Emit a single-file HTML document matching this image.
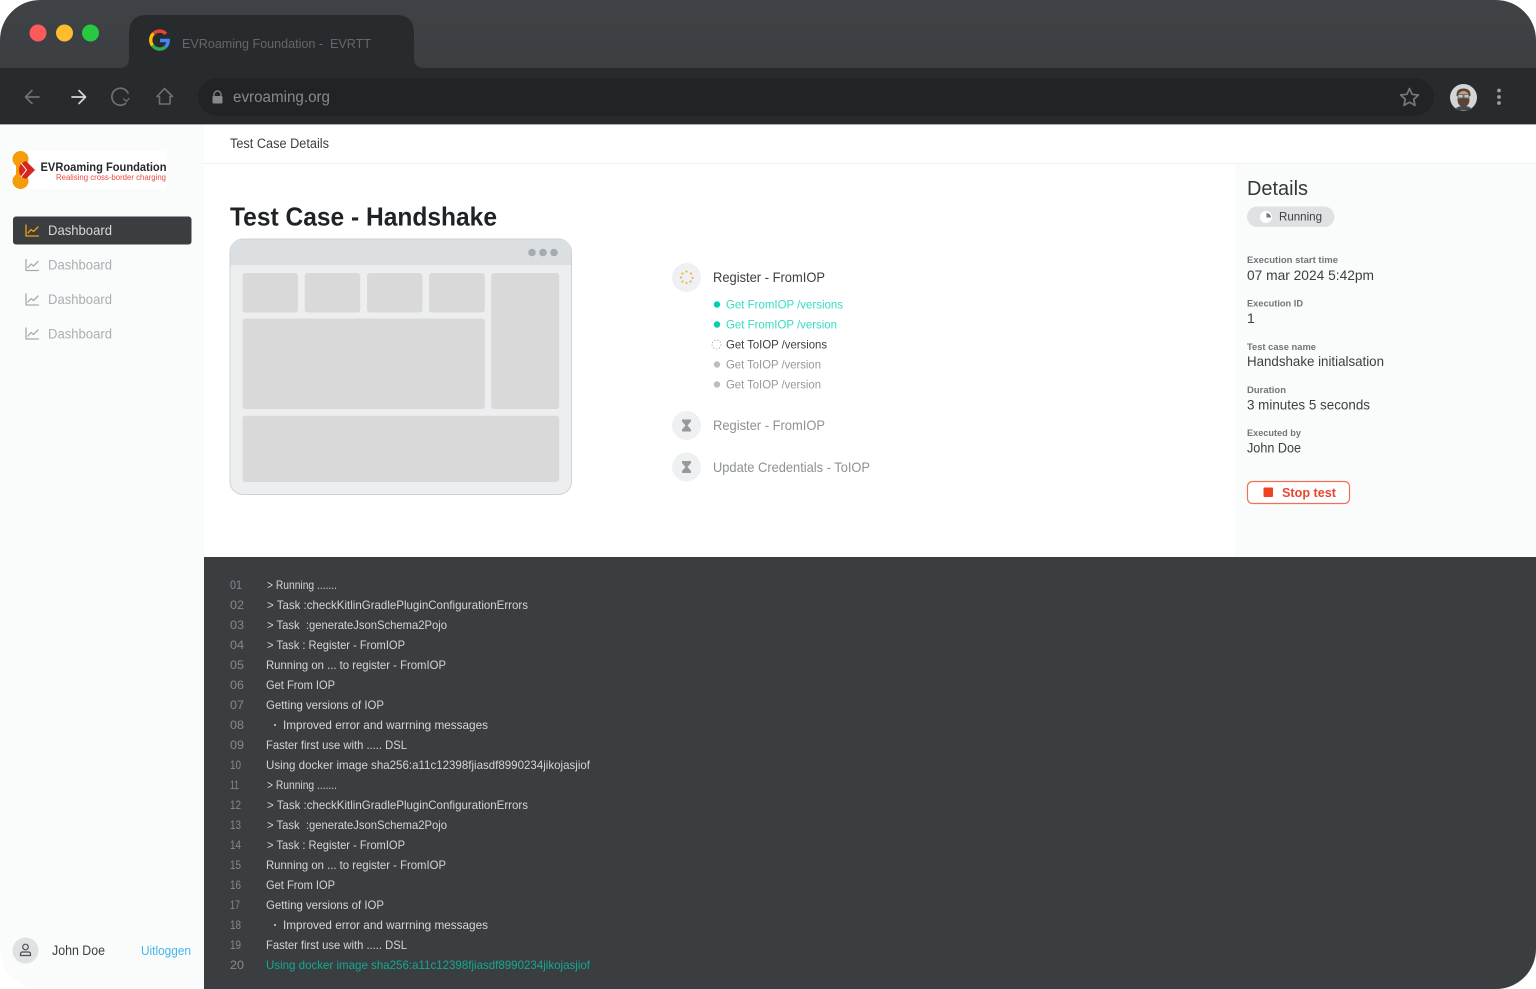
<!DOCTYPE html>
<html><head><meta charset="utf-8"><title>EVRoaming Foundation - EVRTT</title>
<style>
html,body{margin:0;padding:0;background:#fff;width:1536px;height:989px;overflow:hidden}
svg{display:block}
text{font-family:"Liberation Sans",sans-serif;white-space:pre}
.log text{font-size:12px;fill:#d3d5d6}
.log .n{fill:#85898c}
.log .m{font-size:11.500px}
.lab{font-size:9.5px;font-weight:bold;fill:#6f767a}
.val{font-size:14px;fill:#3c4043}
.dash{font-size:14px;fill:#a9afb3}
.sub{font-size:12px}
</style></head><body>
<svg xmlns="http://www.w3.org/2000/svg" width="1536" height="989" viewBox="0 0 1536 989">
<defs>
<clipPath id="frame"><rect width="1536" height="989" rx="40" ry="40"/></clipPath>
<linearGradient id="top" x1="0" y1="0" x2="0" y2="1"><stop offset="0" stop-color="#3f4346"/><stop offset="1" stop-color="#3b3f42"/></linearGradient>
</defs>
<g clip-path="url(#frame)">
<rect width="1536" height="989" fill="#fff"/>
<!-- browser chrome -->
<rect width="1536" height="68" fill="url(#top)"/>
<rect y="68" width="1536" height="57" fill="#282b2e"/>
<rect y="124" width="1536" height="1" fill="#a9acae"/>
<path d="M119 68Q129 68 129 58V33Q129 15 147 15H396Q414 15 414 33V58Q414 68 424 68Z" fill="#282b2e"/>
<circle cx="38" cy="33" r="8.5" fill="#ff5a5a"/>
<circle cx="64.500" cy="33" r="8.5" fill="#ffbd2e"/>
<circle cx="90.500" cy="33" r="8.5" fill="#28c840"/>
<!-- google G -->
<g fill="none" stroke-width="3.4">
<path d="M166 33.800A9 9 0 0 0 153.500 33.500" stroke="#ea4335"/>
<path d="M153.500 33.500A9 9 0 0 0 152.600 45.500" stroke="#fbbc05"/>
<path d="M152.600 45.500A9 9 0 0 0 165.500 47" stroke="#34a853"/>
<path d="M165.500 47A9 9 0 0 0 168.200 40.500H160" stroke="#4285f4"/>
</g>
<text x="182" y="48" font-size="13" fill="#63676a" textLength="189" lengthAdjust="spacingAndGlyphs">EVRoaming Foundation -  EVRTT</text>
<!-- toolbar -->
<rect x="198" y="78" width="1236" height="38" rx="19" fill="#212427"/>
<g fill="none" stroke-linecap="round" stroke-linejoin="round">
<path d="M39 97H26M32 90.500L25.500 97L32 103.500" stroke="#6d7174" stroke-width="1.700"/>
<path d="M72 97H85M79 90.500L85.500 97L79 103.500" stroke="#d5d7d8" stroke-width="1.700"/>
<path d="M128 93A8.500 8.500 0 1 0 125.500 103.500" stroke="#6d7174" stroke-width="1.700"/>
<path d="M123.800 98.800L126.500 101.500L129 98.500" stroke="#6d7174" stroke-width="1.300"/>
<path d="M157 96.500L164.500 88.500L172.500 96.500H170V104H159.500V96.500Z" stroke="#6d7174" stroke-width="1.600"/>
<path d="M1409.500 88.500L1412.100 94.300L1418.400 95L1413.700 99.200L1415 105.400L1409.500 102.200L1404 105.400L1405.300 99.200L1400.600 95L1406.900 94.300Z" stroke="#75797c" stroke-width="1.700"/>
</g>
<path d="M214 96.500V94.500A3.500 3.500 0 0 1 221 94.500V96.500" fill="none" stroke="#868a8d" stroke-width="1.300"/>
<rect x="212.500" y="96" width="10" height="7.500" rx="1" fill="#868a8d"/>
<text x="233" y="102" font-size="15.500" fill="#868a8d" textLength="97" lengthAdjust="spacingAndGlyphs">evroaming.org</text>
<circle cx="1463.500" cy="97.500" r="13.500" fill="#d4d5d5"/>
<path d="M1456.500 96Q1456 88.500 1463.500 88.500Q1471 88.500 1470.500 96Z" fill="#5b4336"/>
<ellipse cx="1463.500" cy="98" rx="6" ry="7" fill="#c79c86"/>
<path d="M1457.500 99Q1463.500 97 1469.500 99Q1469.500 106.500 1463.500 106.500Q1457.500 106.500 1457.500 99Z" fill="#5b4336"/>
<rect x="1458" y="94.500" width="5" height="3.500" fill="#bfc5c6" stroke="#4d5356" stroke-width=".7"/>
<rect x="1464" y="94.500" width="5" height="3.500" fill="#bfc5c6" stroke="#4d5356" stroke-width=".7"/>
<path d="M1456 108Q1463.500 103.500 1471 108L1469 110.500H1458Z" fill="#454a4d"/>
<circle cx="1499" cy="90.500" r="1.900" fill="#9a9da0"/><circle cx="1499" cy="97" r="1.900" fill="#9a9da0"/><circle cx="1499" cy="103" r="1.900" fill="#9a9da0"/>

<!-- sidebar -->
<rect y="125" width="204" height="864" fill="#fafbfb"/>
<rect x="13" y="151" width="153.500" height="38" fill="#fff"/>
<circle cx="20.500" cy="159" r="8" fill="#f59c0b"/>
<circle cx="20.500" cy="181" r="8" fill="#f59c0b"/>
<rect x="16" y="160" width="9" height="20" fill="#f59c0b"/>
<path d="M26 161L35 170L26 179Q19 177 19 170Q19 163 26 161Z" fill="#d8261c"/>
<path d="M21 163L26.500 170L21 177" fill="none" stroke="#fff" stroke-width="1"/>
<text x="40.500" y="171" font-size="12" font-weight="bold" fill="#26292b" textLength="126" lengthAdjust="spacingAndGlyphs">EVRoaming Foundation</text>
<text x="56" y="180" font-size="8" fill="#ea4b40" textLength="110" lengthAdjust="spacingAndGlyphs">Realising cross-border charging</text>

<rect x="13" y="216.500" width="178.500" height="28" rx="3" fill="#3a3e41"/>
<g fill="none" stroke-width="1.300" stroke-linejoin="round" stroke-linecap="round">
<path d="M26 225V236H38.500M28 233L31 229.500L33.500 231.500L38 227" stroke="#f0a012"/>
<path d="M26 259.500V270.500H38.500M28 267.500L31 264L33.500 266L38 261.500" stroke="#a5abaf"/>
<path d="M26 294V305H38.500M28 302L31 298.500L33.500 300.500L38 296" stroke="#a5abaf"/>
<path d="M26 328V339H38.500M28 336L31 332.500L33.500 334.500L38 330" stroke="#a5abaf"/>
</g>
<text x="48" y="235" class="dash" style="fill:#d6d8d9" textLength="64" lengthAdjust="spacingAndGlyphs">Dashboard</text>
<text x="48" y="269.500" class="dash" textLength="64" lengthAdjust="spacingAndGlyphs">Dashboard</text>
<text x="48" y="304" class="dash" textLength="64" lengthAdjust="spacingAndGlyphs">Dashboard</text>
<text x="48" y="338.500" class="dash" textLength="64" lengthAdjust="spacingAndGlyphs">Dashboard</text>

<circle cx="25.500" cy="950.500" r="13" fill="#dfe1e3"/>
<circle cx="25.500" cy="947" r="2.800" fill="none" stroke="#4c5053" stroke-width="1.200"/>
<path d="M20.500 955.500V954Q20.500 952 23 952H28Q30.500 952 30.500 954V955.500Z" fill="none" stroke="#4c5053" stroke-width="1.200"/>
<text x="52" y="955" font-size="14" fill="#3c4043" textLength="53" lengthAdjust="spacingAndGlyphs">John Doe</text>
<text x="141" y="955" font-size="12.500" fill="#45b5ea" textLength="50" lengthAdjust="spacingAndGlyphs">Uitloggen</text>

<!-- header -->
<rect x="204" y="163" width="1332" height="1" fill="#f1f2f3"/>
<text x="230" y="148" font-size="13.500" fill="#3c4043" textLength="99" lengthAdjust="spacingAndGlyphs">Test Case Details</text>
<text x="230" y="225.500" font-size="26" font-weight="bold" fill="#1f2326" textLength="267" lengthAdjust="spacingAndGlyphs">Test Case - Handshake</text>

<!-- illustration -->
<rect x="230" y="239" width="341.500" height="255.500" rx="13" fill="#edeef0" stroke="#ced2d4"/>
<path d="M230.500 265V252Q230.500 239.500 243 239.500H558.500Q571 239.500 571 252V265Z" fill="#dcdfe1"/>
<circle cx="532" cy="252.500" r="3.800" fill="#a5abaf"/><circle cx="543" cy="252.500" r="3.800" fill="#a5abaf"/><circle cx="554" cy="252.500" r="3.800" fill="#a5abaf"/>
<g fill="#d9d9d9">
<rect x="242.500" y="273" width="55.500" height="39.500" rx="3"/>
<rect x="304.700" y="273" width="55.500" height="39.500" rx="3"/>
<rect x="367" y="273" width="55.500" height="39.500" rx="3"/>
<rect x="429" y="273" width="55.800" height="39.500" rx="3"/>
<rect x="491.200" y="273" width="68" height="136" rx="3"/>
<rect x="242.500" y="318.500" width="242.300" height="90.500" rx="3"/>
<rect x="242.500" y="415.700" width="316.700" height="66.300" rx="3"/>
</g>

<!-- steps -->
<circle cx="686.500" cy="277.500" r="14.500" fill="#eff0f1"/>
<g fill="#f4a52c">
<circle cx="686.500" cy="271.500" r="1"/><circle cx="691" cy="273.500" r="1"/><circle cx="692.500" cy="278" r="1"/><circle cx="690.500" cy="281.500" r="1"/><circle cx="686.500" cy="283" r="1"/><circle cx="682.500" cy="281.500" r="1"/><circle cx="681" cy="277.500" r="1"/><circle cx="682.500" cy="273.500" r="1"/>
</g>
<text x="713" y="282" font-size="14" fill="#3c4043" textLength="112" lengthAdjust="spacingAndGlyphs">Register - FromIOP</text>
<circle cx="717" cy="304.500" r="3.200" fill="#00d1ae"/>
<circle cx="717" cy="324.500" r="3.200" fill="#00d1ae"/>
<circle cx="716.500" cy="344.500" r="4.500" fill="none" stroke="#b4b8ba" stroke-width="1" stroke-dasharray="1.500 1.600"/>
<circle cx="717" cy="364.500" r="3.200" fill="#bbbfc1"/>
<circle cx="717" cy="384.500" r="3.200" fill="#bbbfc1"/>
<text x="726" y="308.500" class="sub" fill="#35dcc1" textLength="117" lengthAdjust="spacingAndGlyphs">Get FromIOP /versions</text>
<text x="726" y="328.500" class="sub" fill="#35dcc1" textLength="111" lengthAdjust="spacingAndGlyphs">Get FromIOP /version</text>
<text x="726" y="348.500" class="sub" fill="#3c4043" textLength="101" lengthAdjust="spacingAndGlyphs">Get ToIOP /versions</text>
<text x="726" y="368.500" class="sub" fill="#94999c" textLength="95" lengthAdjust="spacingAndGlyphs">Get ToIOP /version</text>
<text x="726" y="388.500" class="sub" fill="#94999c" textLength="95" lengthAdjust="spacingAndGlyphs">Get ToIOP /version</text>
<circle cx="686.500" cy="425.500" r="14.500" fill="#eff0f1"/>
<path d="M682 419.500H691V421.500L687.500 425.500L691 429.500V431.500H682V429.500L685.500 425.500L682 421.500Z" fill="#949a9e"/>
<text x="713" y="430" font-size="14" fill="#8d9295" textLength="112" lengthAdjust="spacingAndGlyphs">Register - FromIOP</text>
<circle cx="686.500" cy="467" r="14.500" fill="#eff0f1"/>
<path d="M682 461H691V463L687.500 467L691 471V473H682V471L685.500 467L682 463Z" fill="#949a9e"/>
<text x="713" y="472" font-size="14" fill="#8d9295" textLength="157" lengthAdjust="spacingAndGlyphs">Update Credentials - ToIOP</text>

<!-- details -->
<rect x="1235" y="164" width="301" height="393" fill="#fafbfb"/>
<text x="1247" y="195" font-size="20" fill="#33373a" textLength="61" lengthAdjust="spacingAndGlyphs">Details</text>
<rect x="1247" y="206.500" width="87.500" height="20.500" rx="10.250" fill="#dfe1e3"/>
<circle cx="1266" cy="217" r="6" fill="#fff"/>
<path d="M1266.500 213V217.500H1271Q1270.500 213.500 1266.500 213Z" fill="#6f767a"/>
<text x="1279" y="220.500" font-size="12" fill="#3c4043" textLength="43" lengthAdjust="spacingAndGlyphs">Running</text>
<text x="1247" y="263" class="lab" textLength="91" lengthAdjust="spacingAndGlyphs">Execution start time</text>
<text x="1247" y="280" class="val" textLength="127" lengthAdjust="spacingAndGlyphs">07 mar 2024 5:42pm</text>
<text x="1247" y="306.500" class="lab" textLength="56" lengthAdjust="spacingAndGlyphs">Execution ID</text>
<text x="1247" y="323" class="val">1</text>
<text x="1247" y="350" class="lab" textLength="69" lengthAdjust="spacingAndGlyphs">Test case name</text>
<text x="1247" y="366" class="val" textLength="137" lengthAdjust="spacingAndGlyphs">Handshake initialsation</text>
<text x="1247" y="393" class="lab" textLength="39" lengthAdjust="spacingAndGlyphs">Duration</text>
<text x="1247" y="409.500" class="val" textLength="123" lengthAdjust="spacingAndGlyphs">3 minutes 5 seconds</text>
<text x="1247" y="436" class="lab" textLength="54" lengthAdjust="spacingAndGlyphs">Executed by</text>
<text x="1247" y="452.500" class="val" textLength="54" lengthAdjust="spacingAndGlyphs">John Doe</text>
<rect x="1247.500" y="481.500" width="102" height="22" rx="5" fill="#fff" stroke="#f0705a" stroke-width="1.200"/>
<rect x="1263.500" y="487.500" width="9.500" height="9.500" rx="1" fill="#ee4323"/>
<text x="1282" y="497" font-size="13" font-weight="bold" fill="#e8472d" textLength="54" lengthAdjust="spacingAndGlyphs">Stop test</text>

<!-- log -->
<rect x="204" y="557" width="1332" height="432" fill="#3a3e41"/>
<g class="log">
<text class="n" x="230" y="589" textLength="12" lengthAdjust="spacingAndGlyphs">01</text><text x="267" y="589" textLength="70" lengthAdjust="spacingAndGlyphs">&gt; Running .......</text>
<text class="n" x="230" y="609" textLength="14" lengthAdjust="spacingAndGlyphs">02</text><text x="267" y="609" textLength="261" lengthAdjust="spacingAndGlyphs">&gt; Task :checkKitlinGradlePluginConfigurationErrors</text>
<text class="n" x="230" y="629" textLength="14" lengthAdjust="spacingAndGlyphs">03</text><text x="267" y="629" textLength="180" lengthAdjust="spacingAndGlyphs">&gt; Task  :generateJsonSchema2Pojo</text>
<text class="n" x="230" y="649" textLength="14" lengthAdjust="spacingAndGlyphs">04</text><text x="267" y="649" textLength="138" lengthAdjust="spacingAndGlyphs">&gt; Task : Register - FromIOP</text>
<text class="n" x="230" y="669" textLength="14" lengthAdjust="spacingAndGlyphs">05</text><text x="266" y="669" textLength="180" lengthAdjust="spacingAndGlyphs">Running on ... to register - FromIOP</text>
<text class="n" x="230" y="689" textLength="14" lengthAdjust="spacingAndGlyphs">06</text><text x="266" y="689" textLength="69" lengthAdjust="spacingAndGlyphs">Get From IOP</text>
<text class="n" x="230" y="709" textLength="14" lengthAdjust="spacingAndGlyphs">07</text><text x="266" y="709" textLength="118" lengthAdjust="spacingAndGlyphs">Getting versions of IOP</text>
<text class="n" x="230" y="729" textLength="14" lengthAdjust="spacingAndGlyphs">08</text><circle cx="275" cy="725" r="1" fill="#d3d5d6"/><text x="283" y="729" textLength="205" lengthAdjust="spacingAndGlyphs">Improved error and warrning messages</text>
<text class="n" x="230" y="749" textLength="14" lengthAdjust="spacingAndGlyphs">09</text><text x="266" y="749" textLength="141" lengthAdjust="spacingAndGlyphs">Faster first use with ..... DSL</text>
<text class="n m" x="230" y="769" textLength="11" lengthAdjust="spacingAndGlyphs">10</text><text x="266" y="769" textLength="324" lengthAdjust="spacingAndGlyphs">Using docker image sha256:a11c12398fjiasdf8990234jikojasjiof</text>
<text class="n m" x="230" y="789" textLength="9" lengthAdjust="spacingAndGlyphs">11</text><text x="267" y="789" textLength="70" lengthAdjust="spacingAndGlyphs">&gt; Running .......</text>
<text class="n m" x="230" y="809" textLength="11" lengthAdjust="spacingAndGlyphs">12</text><text x="267" y="809" textLength="261" lengthAdjust="spacingAndGlyphs">&gt; Task :checkKitlinGradlePluginConfigurationErrors</text>
<text class="n m" x="230" y="829" textLength="11" lengthAdjust="spacingAndGlyphs">13</text><text x="267" y="829" textLength="180" lengthAdjust="spacingAndGlyphs">&gt; Task  :generateJsonSchema2Pojo</text>
<text class="n m" x="230" y="849" textLength="11" lengthAdjust="spacingAndGlyphs">14</text><text x="267" y="849" textLength="138" lengthAdjust="spacingAndGlyphs">&gt; Task : Register - FromIOP</text>
<text class="n m" x="230" y="869" textLength="11" lengthAdjust="spacingAndGlyphs">15</text><text x="266" y="869" textLength="180" lengthAdjust="spacingAndGlyphs">Running on ... to register - FromIOP</text>
<text class="n m" x="230" y="889" textLength="11" lengthAdjust="spacingAndGlyphs">16</text><text x="266" y="889" textLength="69" lengthAdjust="spacingAndGlyphs">Get From IOP</text>
<text class="n m" x="230" y="909" textLength="10" lengthAdjust="spacingAndGlyphs">17</text><text x="266" y="909" textLength="118" lengthAdjust="spacingAndGlyphs">Getting versions of IOP</text>
<text class="n m" x="230" y="929" textLength="11" lengthAdjust="spacingAndGlyphs">18</text><circle cx="275" cy="925" r="1" fill="#d3d5d6"/><text x="283" y="929" textLength="205" lengthAdjust="spacingAndGlyphs">Improved error and warrning messages</text>
<text class="n m" x="230" y="949" textLength="11" lengthAdjust="spacingAndGlyphs">19</text><text x="266" y="949" textLength="141" lengthAdjust="spacingAndGlyphs">Faster first use with ..... DSL</text>
<text class="n" x="230" y="969" textLength="14" lengthAdjust="spacingAndGlyphs">20</text><text x="266" y="969" style="fill:#14a98f" textLength="324" lengthAdjust="spacingAndGlyphs">Using docker image sha256:a11c12398fjiasdf8990234jikojasjiof</text>
</g>
</g>
</svg>
</body></html>
